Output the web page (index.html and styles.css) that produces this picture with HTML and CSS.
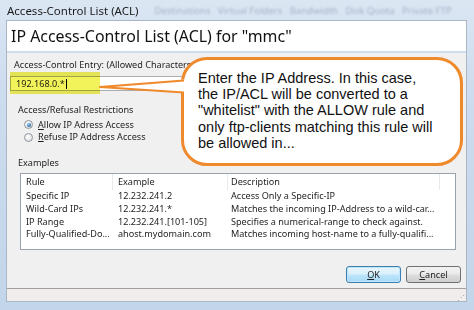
FILE: index.html
```html
<!DOCTYPE html>
<html>
<head>
<meta charset="utf-8">
<link rel="stylesheet" href="styles.css">
</head>
<body>
<div class="window">
  <div class="titlebar">
    <span class="title">Access-Control List (ACL)</span>
    <span class="ghost">Destinations &nbsp; Virtual Folders &nbsp; Bandwidth &nbsp; Disk Quota &nbsp; Private FTP</span>
  </div>
  <div class="client">
    <div class="header">IP Access-Control List (ACL) for "mmc"</div>
    <div class="content">
      <div class="label">Access-Control Entry: (Allowed Characters: 0-9 . * [ ] -)</div>
      <div class="input">192.168.0.*<span class="caret"></span></div>
      <div class="group restrictions">
        <div class="glabel">Access/Refusal Restrictions</div>
        <div class="radio first"><span class="rb on"></span><span class="rtext"><u>A</u>llow IP Adress Access</span></div>
        <div class="radio"><span class="rb"></span><span class="rtext"><u>R</u>efuse IP Address Access</span></div>
      </div>
      <div class="group examples">
        <div class="glabel">Examples</div>
        <div class="list">
          <div class="row head"><span>Rule</span><span>Example</span><span>Description</span><span></span></div>
          <div class="row"><span>Specific IP</span><span>12.232.241.2</span><span>Access Only a Specific-IP</span><span></span></div>
          <div class="row"><span>Wild-Card IPs</span><span>12.232.241.*</span><span>Matches the incoming IP-Address to a wild-car...</span><span></span></div>
          <div class="row"><span>IP Range</span><span>12.232.241.[101-105]</span><span>Specifies a numerical-range to check against.</span><span></span></div>
          <div class="row"><span>Fully-Qualified-Do...</span><span>ahost.mydomain.com</span><span>Matches incoming host-name to a fully-qualifi...</span><span></span></div>
        </div>
      </div>
      <div class="buttons">
        <button class="btn default"><u>O</u>K</button>
        <button class="btn"><u>C</u>ancel</button>
      </div>
    </div>
    <div class="status"><span class="grip">⋰</span></div>
  </div>

  <div class="highlight"></div>
  <svg class="tail" width="100" height="30" viewBox="0 0 100 30">
    <polygon points="2,14 92,6 92,20" fill="#ffffff"/>
    <polyline points="86,7.5 2,14 86,19.5" fill="none" stroke="#ef8a2c" stroke-width="2" stroke-linejoin="round"/>
  </svg>
  <div class="callout">Enter the IP Address. In this case, the IP/ACL will be converted to a "whitelist" with the ALLOW rule and only ftp-clients matching this rule will be allowed in...</div>
</div>
</body>
</html>
```

FILE: styles.css
```css
* { box-sizing: border-box; }
html, body { margin: 0; padding: 0; }
body {
  width: 474px;
  height: 310px;
  overflow: hidden;
  background: #c7d8ec;
}
.window {
  position: relative;
  width: 474px;
  height: 310px;
  display: flex;
  flex-direction: column;
  padding: 0 7px 8px 6px;
  background: linear-gradient(180deg, #dbe6f3 0%, #cddcee 30%, #c3d5ea 100%);
}
.titlebar {
  height: 20px;
  flex: none;
  display: flex;
  align-items: center;
  position: relative;
  font-family: "Noto Sans", sans-serif;
  font-size: 11.5px;
  color: #1b1b1b;
  white-space: nowrap;
  overflow: hidden;
}
.title { padding-left: 1px; }
.ghost {
  margin-left: 16px;
  color: #7e8ea6;
  font-size: 9.5px;
  filter: blur(1.2px);
  opacity: 0.6;
}
.client {
  flex: 1;
  display: flex;
  flex-direction: column;
  background: #f0f0f0;
  border: 1px solid #a9b6c5;
  font-family: "Noto Sans", sans-serif;
  font-size: 9.1px;
  color: #1e1e1e;
}
.header {
  height: 32px;
  flex: none;
  background: #ffffff;
  border-bottom: 2px solid #cfdeee;
  padding: 3px 0 0 4px;
  font-size: 15.9px;
  color: #111;
  line-height: 24px;
}
.content {
  flex: 1;
  display: flex;
  flex-direction: column;
  padding: 6px 5px 0 3px;
}
.label {
  padding-left: 4px;
  line-height: 12px;
  height: 12px;
  white-space: nowrap;
}
.input {
  margin-top: 5px;
  height: 15px;
  background: #fff;
  border: 1px solid #abadb3;
  padding-left: 5px;
  line-height: 13px;
  display: flex;
  align-items: center;
}
.caret {
  display: inline-block;
  width: 1px;
  height: 10px;
  background: #000;
  margin-left: 1px;
}
.group { padding-left: 8px; }
.glabel { line-height: 12px; height: 12px; }
.restrictions { margin-top: 13px; }
.radio {
  display: flex;
  align-items: center;
  height: 12.4px;
  padding-left: 6px;
  gap: 5px;
}
.rtext { line-height: 12.4px; }
.radio.first { margin-top: 2.5px; }
.rb {
  width: 9px;
  height: 9px;
  border-radius: 50%;
  border: 1px solid #8f969e;
  background: radial-gradient(circle at 40% 35%, #ffffff 0%, #e2e4e7 70%, #cfd3d8 100%);
  position: relative;
}
.rb.on::after {
  content: "";
  position: absolute;
  left: 1.5px;
  top: 1.5px;
  width: 4px;
  height: 4px;
  border-radius: 50%;
  background: radial-gradient(circle at 40% 35%, #a7d3f5 0%, #2f6fb3 60%, #1a4f8c 100%);
}
.examples { margin-top: 13.7px; padding-right: 5px; }
.examples .glabel { margin-bottom: 4px; }
.list {
  margin-left: 2px;
  height: 77px;
  background: #fff;
  border: 1px solid #9aa3ad;
}
.row {
  display: grid;
  grid-template-columns: 92px 115px 212px 1fr;
  height: 12.6px;
  line-height: 12.6px;
  white-space: nowrap;
}
.row span { padding-left: 5px; overflow: hidden; }
.row span:nth-child(3) { padding-left: 3px; }
.row.head {
  height: 16px;
  line-height: 15px;
  margin-bottom: 0.5px;
}
.row.head span { border-right: 1px solid #e6e9ee; }
.row.head span:nth-child(4) { border-right: none; }
.buttons {
  margin-top: 16px;
  display: flex;
  justify-content: flex-end;
  gap: 5px;
}
.btn {
  width: 55px;
  height: 17px;
  font-family: "Noto Sans", sans-serif;
  font-size: 9.1px;
  color: #1e1e1e;
  border: 1px solid #707070;
  border-radius: 3px;
  background: linear-gradient(180deg, #f2f2f2 0%, #ebebeb 48%, #dddddd 52%, #cfcfcf 100%);
  padding: 0;
}
.btn.default {
  border-color: #3c7fb1;
  box-shadow: inset 0 0 0 1px #bfe4fb;
  background: linear-gradient(180deg, #eaf6fd 0%, #d9f0fc 48%, #bee6fd 52%, #a7d9f5 100%);
}
.status {
  height: 13px;
  flex: none;
  border-top: 1px solid #a0a0a0;
  background: #f1eded;
  display: flex;
  justify-content: flex-end;
  align-items: flex-end;
}
.grip {
  font-size: 8px;
  color: #9a9a9a;
  line-height: 8px;
  padding-right: 1px;
}
.highlight {
  position: absolute;
  left: 10px;
  top: 72px;
  width: 90px;
  height: 22px;
  background: #f2f25a;
  mix-blend-mode: multiply;
}
.tail {
  position: absolute;
  left: 98px;
  top: 73px;
  z-index: 2;
}
.callout {
  position: absolute;
  left: 181px;
  top: 57px;
  width: 282px;
  height: 109px;
  z-index: 1;
  background: #fff;
  border: 3px solid #ef8a2c;
  border-radius: 26px;
  padding: 10px 23px 0 14px;
  font-family: "Liberation Sans", Arial, sans-serif;
  font-size: 14.5px;
  line-height: 16.2px;
  color: #111;
}
```
